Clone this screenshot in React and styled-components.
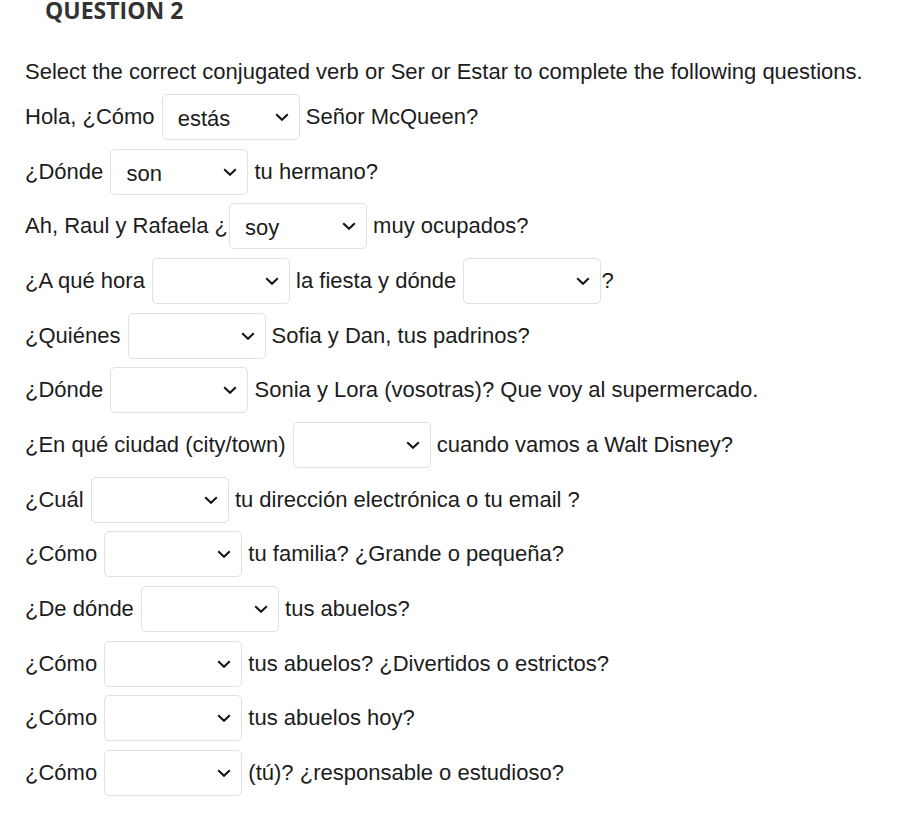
import React from "react";
import styled, { createGlobalStyle } from "styled-components";

const GlobalStyle = createGlobalStyle`
  html, body {
    margin: 0;
    padding: 0;
    background: #fff;
  }
  body {
    font-family: "Liberation Sans", Arial, sans-serif;
    color: #1c1c1c;
  }
`;

const Page = styled.div`
  padding: 0 25px 20px;
`;

const Heading = styled.h2`
  font-family: "Open Sans", sans-serif;
  font-weight: 700;
  font-size: 23px;
  line-height: 24px;
  color: #333;
  margin: -2px 0 0 20px;
`;

const Intro = styled.p`
  font-size: 22px;
  line-height: 26px;
  margin: 37px 0 0;
`;

const Rows = styled.div`
  display: flex;
  flex-direction: column;
  gap: 8.67px;
  margin-top: 9px;
`;

const Row = styled.div`
  display: flex;
  align-items: center;
  height: 46px;
  font-size: 22px;
`;

const Text = styled.span`
  white-space: pre;
`;

const SelectWrap = styled.div`
  position: relative;
  margin: 0 0 0 1px;
`;

const Select = styled.select`
  appearance: none;
  -webkit-appearance: none;
  width: 138px;
  height: 46px;
  box-sizing: border-box;
  border: 1px solid #e0e0e0;
  border-radius: 5px;
  background: #fff;
  padding: 3px 30px 0 15px;
  font-family: "Liberation Sans", Arial, sans-serif;
  font-size: 22px;
  color: #1c1c1c;
  outline: none;
`;

const Chevron = styled.svg`
  position: absolute;
  right: 11px;
  top: 50%;
  margin-top: -4px;
  pointer-events: none;
`;

const Dropdown = ({ value = "" }) => (
  <SelectWrap>
    <Select defaultValue={value}>
      <option value=""></option>
      {["soy", "eres", "es", "somos", "sois", "son", "estoy", "estás", "está", "estamos", "estáis", "están"].map((o) => (
        <option key={o} value={o}>
          {o}
        </option>
      ))}
    </Select>
    <Chevron width="14" height="8" viewBox="0 0 14 8">
      <polyline points="1.2,1.2 7,6.8 12.8,1.2" fill="none" stroke="#111" strokeWidth="2" />
    </Chevron>
  </SelectWrap>
);

// strings keep their own spaces; objects are dropdowns
const questions = [
  ["Hola, ¿Cómo ", { value: "estás" }, " Señor McQueen?"],
  ["¿Dónde ", { value: "son" }, " tu hermano?"],
  ["Ah, Raul y Rafaela ¿", { value: "soy" }, " muy ocupados?"],
  ["¿A qué hora ", {}, " la fiesta y dónde ", {}, "?"],
  ["¿Quiénes ", {}, " Sofia y Dan, tus padrinos?"],
  ["¿Dónde ", {}, " Sonia y Lora (vosotras)? Que voy al supermercado."],
  ["¿En qué ciudad (city/town) ", {}, " cuando vamos a Walt Disney?"],
  ["¿Cuál ", {}, " tu dirección electrónica o tu email ?"],
  ["¿Cómo ", {}, " tu familia? ¿Grande o pequeña?"],
  ["¿De dónde ", {}, " tus abuelos?"],
  ["¿Cómo ", {}, " tus abuelos? ¿Divertidos o estrictos?"],
  ["¿Cómo ", {}, " tus abuelos hoy?"],
  ["¿Cómo ", {}, " (tú)? ¿responsable o estudioso?"],
];

export default function App() {
  return (
    <Page>
      <GlobalStyle />
      <Heading>QUESTION 2</Heading>
      <Intro>Select the correct conjugated verb or Ser or Estar to complete the following questions.</Intro>
      <Rows>
        {questions.map((parts, i) => (
          <Row key={i}>
            {parts.map((p, j) =>
              typeof p === "string" ? <Text key={j}>{p}</Text> : <Dropdown key={j} {...p} />
            )}
          </Row>
        ))}
      </Rows>
    </Page>
  );
}
